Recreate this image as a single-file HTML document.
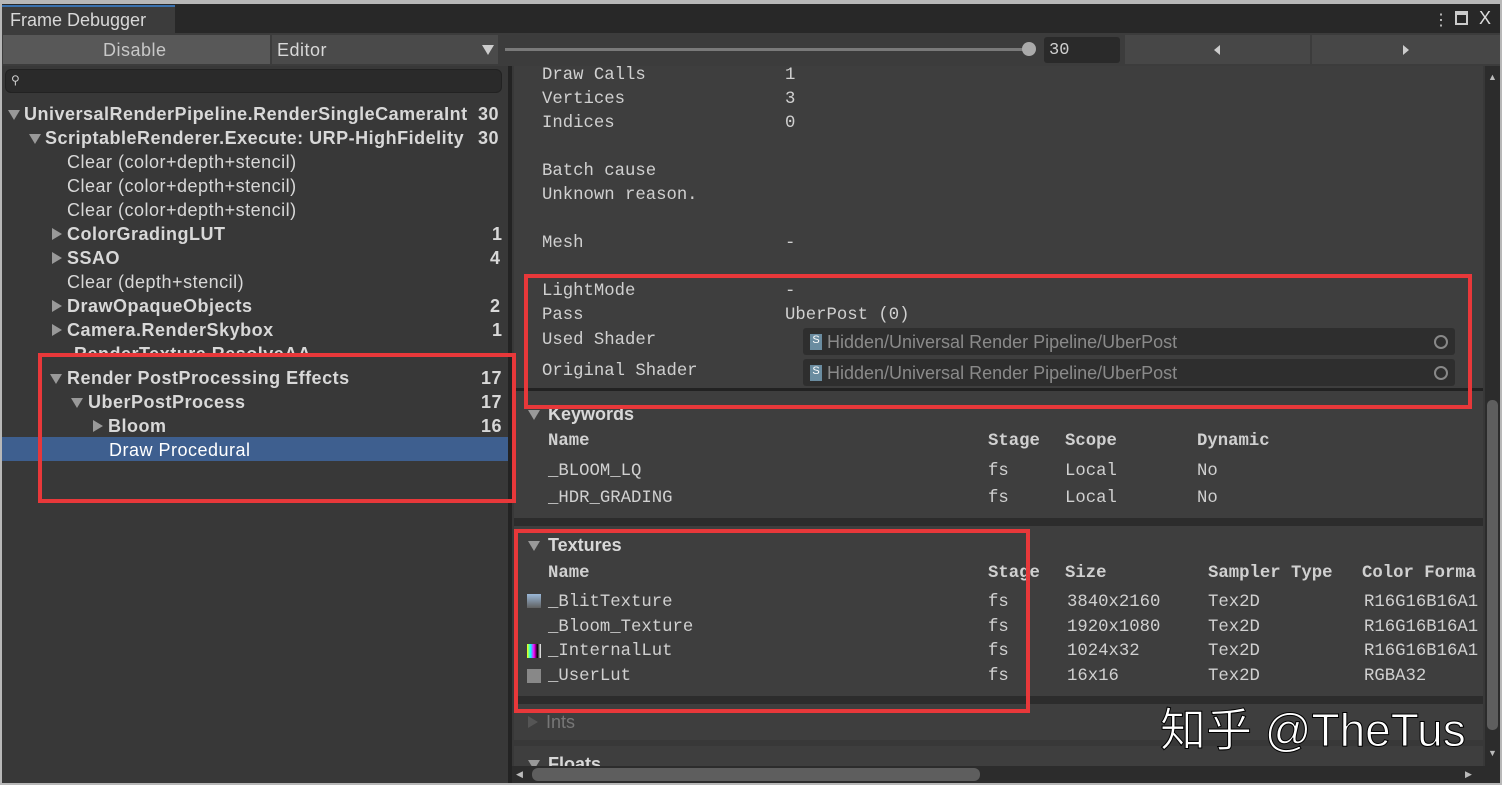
<!DOCTYPE html>
<html><head><meta charset="utf-8"><style>
*{margin:0;padding:0;box-sizing:border-box}
body{width:1502px;height:785px;background:#b8b8b8;position:relative;overflow:hidden;font-family:"Liberation Sans",sans-serif;color:#d2d2d2}
.a{position:absolute;white-space:nowrap}
.m{font-family:"Liberation Mono",monospace;font-size:17.3px;color:#d0d0d0}
.t{font-size:17px;color:#d8d8d8}
.b{font-weight:bold}
.red{position:absolute;border:4px solid #e8383a}
.tri{display:inline-block;width:0;height:0;border-left:6px solid transparent;border-right:6px solid transparent;border-top:10px solid #999}
.trr{display:inline-block;width:0;height:0;border-top:6px solid transparent;border-bottom:6px solid transparent;border-left:10px solid #999}
.tree{font-size:18px;letter-spacing:0.5px}
</style></head><body>
<div class="a" style="left:2px;top:4px;width:1498px;height:779px;background:#282828"></div>
<div class="a" style="left:2px;top:5px;width:173px;height:29px;background:#3c3c3c;border-top:2px solid #3a72b0"></div>
<div class="a t" style="left:10px;top:10px;font-size:18px">Frame Debugger</div>
<div class="a" style="left:1433px;top:10px;color:#ccc;font-size:16px">⋮</div>
<div class="a" style="left:1455px;top:11px;width:13px;height:14px;border:2px solid #ccc;border-top-width:4px"></div>
<div class="a" style="left:1479px;top:8px;color:#ddd;font-size:18px">X</div>
<div class="a" style="left:2px;top:33px;width:1498px;height:33px;background:#3c3c3c"></div>
<div class="a" style="left:3px;top:35px;width:267px;height:29px;background:#585858"></div>
<div class="a t" style="left:103px;top:40px;color:#c8c8c8;font-size:18px;letter-spacing:0.5px">Disable</div>
<div class="a" style="left:272px;top:35px;width:226px;height:29px;background:#4a4a4a"></div>
<div class="a t" style="left:277px;top:40px;font-size:18px;letter-spacing:0.5px">Editor</div>
<div class="a tri" style="left:482px;top:45px;border-top-color:#ccc"></div>
<div class="a" style="left:505px;top:48px;width:522px;height:3px;background:#7a7a7a"></div>
<div class="a" style="left:1022px;top:42px;width:14px;height:14px;border-radius:50%;background:#aaa"></div>
<div class="a" style="left:1044px;top:37px;width:76px;height:26px;background:#2a2a2a;border-radius:3px"></div>
<div class="a m" style="left:1049px;top:41px;font-size:17px">30</div>
<div class="a" style="left:1125px;top:35px;width:185px;height:29px;background:#474747"></div>
<div class="a" style="left:1312px;top:35px;width:188px;height:29px;background:#474747"></div>
<div class="a" style="left:1214px;top:45px;border-top:5px solid transparent;border-bottom:5px solid transparent;border-right:6px solid #ccc"></div>
<div class="a" style="left:1403px;top:45px;border-top:5px solid transparent;border-bottom:5px solid transparent;border-left:6px solid #ccc"></div>
<div class="a" style="left:2px;top:66px;width:506px;height:717px;background:#383838"></div>
<div class="a" style="left:5px;top:69px;width:497px;height:24px;background:#2a2a2a;border-radius:6px;border:1px solid #222"></div>
<div class="a" style="left:11px;top:73px;font-size:12px;color:#ccc">&#9906;</div>
<div class="a" style="left:2px;top:437px;width:506px;height:24px;background:#3e5f8f"></div>
<div class="a" style="left:2px;top:100px;width:506px;height:400px;overflow:hidden"><div class="a t b tree" style="left:-2px;top:0;width:508px;height:400px">
<div class="a" style="left:8px;top:4px;width:470px;overflow:hidden"><span class="tri" style="margin-right:4px"></span>UniversalRenderPipeline.RenderSingleCameraInt</div><div class="a" style="left:478px;top:4px">30</div>
<div class="a" style="left:29px;top:28px;width:447px;overflow:hidden"><span class="tri" style="margin-right:4px"></span>ScriptableRenderer.Execute: URP-HighFidelity</div><div class="a" style="left:478px;top:28px">30</div>
<div class="a" style="left:67px;top:52px;font-weight:normal">Clear (color+depth+stencil)</div>
<div class="a" style="left:67px;top:76px;font-weight:normal">Clear (color+depth+stencil)</div>
<div class="a" style="left:67px;top:100px;font-weight:normal">Clear (color+depth+stencil)</div>
<div class="a" style="left:52px;top:124px"><span class="trr" style="margin-right:5px"></span>ColorGradingLUT</div><div class="a" style="left:492px;top:124px">1</div>
<div class="a" style="left:52px;top:148px"><span class="trr" style="margin-right:5px"></span>SSAO</div><div class="a" style="left:490px;top:148px">4</div>
<div class="a" style="left:67px;top:172px;font-weight:normal">Clear (depth+stencil)</div>
<div class="a" style="left:52px;top:196px"><span class="trr" style="margin-right:5px"></span>DrawOpaqueObjects</div><div class="a" style="left:490px;top:196px">2</div>
<div class="a" style="left:52px;top:220px"><span class="trr" style="margin-right:5px"></span>Camera.RenderSkybox</div><div class="a" style="left:492px;top:220px">1</div>
<div class="a" style="left:52px;top:244px;height:10px;overflow:hidden">&nbsp;&nbsp;&nbsp;&nbsp;RenderTexture.ResolveAA</div>
<div class="a" style="left:50px;top:268px"><span class="tri" style="margin-right:5px"></span>Render PostProcessing Effects</div><div class="a" style="left:481px;top:268px">17</div>
<div class="a" style="left:71px;top:292px"><span class="tri" style="margin-right:5px"></span>UberPostProcess</div><div class="a" style="left:481px;top:292px">17</div>
<div class="a" style="left:93px;top:316px"><span class="trr" style="margin-right:5px"></span>Bloom</div><div class="a" style="left:481px;top:316px">16</div>
<div class="a" style="left:109px;top:340px;font-weight:normal;color:#fff">Draw Procedural</div>
</div></div>
<div class="a" style="left:508px;top:66px;width:4px;height:717px;background:#232323"></div>
<div class="a" style="left:512px;top:66px;width:973px;height:700px;background:#383838"></div>
<div class="a" style="left:514px;top:66px;width:969px;height:330px;background:#3e3e3e"></div>
<div class="a m" style="left:542px;top:64px;line-height:24px">Draw Calls<br>Vertices<br>Indices<br><br>Batch cause<br>Unknown reason.<br><br>Mesh<br><br>LightMode<br>Pass</div>
<div class="a m" style="left:785px;top:64px;line-height:24px">1<br>3<br>0<br><br><br><br><br>-<br><br>-<br>UberPost (0)</div>
<div class="a m" style="left:542px;top:331px">Used Shader</div>
<div class="a m" style="left:542px;top:362px">Original Shader</div>
<div class="a" style="left:803px;top:328px;width:652px;height:27px;background:#2e2e2e;border-radius:3px"></div>
<div class="a" style="left:803px;top:359px;width:652px;height:27px;background:#2e2e2e;border-radius:3px"></div>
<div class="a" style="left:810px;top:334px;width:12px;height:16px;background:#6a8ca0;font-size:11px;color:#fff;text-align:center">S</div>
<div class="a" style="left:810px;top:365px;width:12px;height:16px;background:#6a8ca0;font-size:11px;color:#fff;text-align:center">S</div>
<div class="a" style="left:827px;top:332px;font-size:18px;color:#8a8a8a">Hidden/Universal Render Pipeline/UberPost</div>
<div class="a" style="left:827px;top:363px;font-size:18px;color:#8a8a8a">Hidden/Universal Render Pipeline/UberPost</div>
<div class="a" style="left:1434px;top:335px;width:14px;height:14px;border:2px solid #888;border-radius:50%"></div>
<div class="a" style="left:1434px;top:366px;width:14px;height:14px;border:2px solid #888;border-radius:50%"></div>
<div class="a" style="left:514px;top:388px;width:969px;height:3px;background:#222"></div>
<div class="a" style="left:514px;top:396px;width:969px;height:122px;background:#3e3e3e"></div>
<div class="a t b" style="left:528px;top:404px;font-size:18px"><span class="tri" style="margin-right:8px"></span>Keywords</div>
<div class="a m b" style="left:548px;top:432px">Name</div><div class="a m b" style="left:988px;top:432px">Stage</div><div class="a m b" style="left:1065px;top:432px">Scope</div><div class="a m b" style="left:1197px;top:432px">Dynamic</div>
<div class="a m" style="left:548px;top:458px;line-height:27px">_BLOOM_LQ<br>_HDR_GRADING</div>
<div class="a m" style="left:988px;top:458px;line-height:27px">fs<br>fs</div>
<div class="a m" style="left:1065px;top:458px;line-height:27px">Local<br>Local</div>
<div class="a m" style="left:1197px;top:458px;line-height:27px">No<br>No</div>
<div class="a" style="left:514px;top:518px;width:969px;height:8px;background:#2c2c2c"></div>
<div class="a" style="left:514px;top:526px;width:969px;height:170px;background:#3e3e3e"></div>
<div class="a t b" style="left:528px;top:535px;font-size:18px"><span class="tri" style="margin-right:8px"></span>Textures</div>
<div class="a m b" style="left:548px;top:564px">Name</div><div class="a m b" style="left:988px;top:564px">Stage</div><div class="a m b" style="left:1065px;top:564px">Size</div><div class="a m b" style="left:1208px;top:564px">Sampler Type</div><div class="a m b" style="left:1362px;top:564px">Color Forma</div>
<div class="a m" style="left:548px;top:591px;line-height:24.5px">_BlitTexture<br>_Bloom_Texture<br>_InternalLut<br>_UserLut</div>
<div class="a m" style="left:988px;top:591px;line-height:24.5px">fs<br>fs<br>fs<br>fs</div>
<div class="a m" style="left:1067px;top:591px;line-height:24.5px">3840x2160<br>1920x1080<br>1024x32<br>16x16</div>
<div class="a m" style="left:1208px;top:591px;line-height:24.5px">Tex2D<br>Tex2D<br>Tex2D<br>Tex2D</div>
<div class="a m" style="left:1364px;top:591px;line-height:24.5px">R16G16B16A1<br>R16G16B16A1<br>R16G16B16A1<br>RGBA32</div>
<div class="a" style="left:527px;top:594px;width:14px;height:14px;background:linear-gradient(#9ab8d8,#606060)"></div>
<div class="a" style="left:527px;top:644px;width:14px;height:14px;background:linear-gradient(90deg,#ff0,#0ff,#f0f,#000,#fff)"></div>
<div class="a" style="left:527px;top:669px;width:14px;height:14px;background:#888"></div>
<div class="a" style="left:514px;top:696px;width:969px;height:8px;background:#2c2c2c"></div>
<div class="a" style="left:514px;top:704px;width:969px;height:36px;background:#3e3e3e"></div>
<div class="a t" style="left:528px;top:712px;color:#777;font-size:18px"><span class="trr" style="margin-right:8px;border-left-color:#555"></span>Ints</div>
<div class="a" style="left:514px;top:746px;width:969px;height:20px;background:#3e3e3e"></div>
<div class="a t b" style="left:528px;top:754px;height:12px;overflow:hidden;font-size:18px"><span class="tri" style="margin-right:8px"></span>Floats</div>
<div class="a" style="left:1160px;top:694px;font-size:46px;color:#fff;font-family:'Liberation Sans','Noto Sans CJK SC',sans-serif;-webkit-text-stroke:1px #000">知乎 @TheTus</div>
<div class="a" style="left:1485px;top:66px;width:15px;height:700px;background:#2c2c2c"></div>
<div class="a" style="left:1487px;top:400px;width:11px;height:330px;background:#5e5e5e;border-radius:5px"></div>
<div class="a" style="left:1488px;top:72px;font-size:9px;color:#bbb">▲</div>
<div class="a" style="left:1488px;top:748px;font-size:9px;color:#bbb">▼</div>
<div class="a" style="left:512px;top:766px;width:988px;height:17px;background:#2c2c2c"></div>
<div class="a" style="left:532px;top:768px;width:448px;height:13px;background:#5e5e5e;border-radius:6px"></div>
<div class="a" style="left:516px;top:769px;font-size:9px;color:#bbb">◀</div>
<div class="a" style="left:1465px;top:769px;font-size:9px;color:#bbb">▶</div>
<div class="red" style="left:38px;top:353px;width:478px;height:150px"></div>
<div class="red" style="left:524px;top:274px;width:948px;height:135px"></div>
<div class="red" style="left:514px;top:529px;width:516px;height:184px"></div>
</body></html>
